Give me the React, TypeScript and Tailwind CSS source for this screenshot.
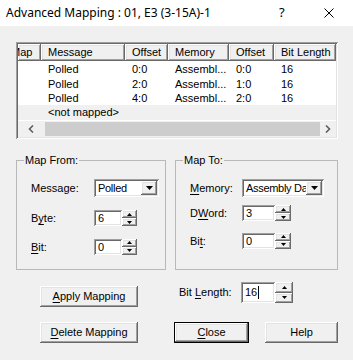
import React from "react";

const sunken =
  "bg-white shadow-[inset_1px_1px_0_#a0a0a0,inset_-1px_-1px_0_#ffffff,inset_2px_2px_0_#696969,inset_-2px_-2px_0_#e3e3e3]";
const raised =
  "bg-[#f0f0f0] shadow-[inset_-1px_-1px_0_#696969,inset_1px_1px_0_#ffffff,inset_-2px_-2px_0_#a0a0a0,inset_2px_2px_0_#e3e3e3]";

function U({ children }: { children: React.ReactNode }) {
  return <span className="underline underline-offset-[2px]">{children}</span>;
}

function Arrow({ dir }: { dir: "up" | "down" }) {
  const pts = dir === "up" ? "0,3 2.5,0 5,3" : "0,0 5,0 2.5,3";
  return (
    <svg width={5} height={3} viewBox="0 0 5 3">
      <polygon points={pts} fill="#000" />
    </svg>
  );
}

function Spin({ w, h }: { w: number; h: number }) {
  return (
    <div className="flex flex-col" style={{ width: w, height: h }}>
      <div className={`${raised} flex-1 flex items-center justify-center`}>
        <Arrow dir="up" />
      </div>
      <div className={`${raised} flex-1 flex items-center justify-center`}>
        <Arrow dir="down" />
      </div>
    </div>
  );
}

function SpinEdit({ value, w, sw, h = 16, caret }: { value: string; w: number; sw: number; h?: number; caret?: boolean }) {
  return (
    <div className="flex">
      <div className={`${sunken} flex items-center pl-[4px]`} style={{ width: w, height: h }}>
        <span>{value}</span>
        {caret && <span className="w-px h-[13px] bg-black ml-px" />}
      </div>
      <Spin w={sw} h={h} />
    </div>
  );
}

function Combo({ value, w }: { value: string; w: number }) {
  return (
    <div className={`${sunken} flex items-center h-[18px] p-[2px]`} style={{ width: w }}>
      <span className="flex-1 overflow-hidden whitespace-nowrap pl-[2px] tracking-[-0.3px]">{value}</span>
      <div className={`${raised} w-[16px] h-full flex items-center justify-center shrink-0`}>
        <svg width="7" height="4" viewBox="0 0 7 4">
          <polygon points="0,0 7,0 3.5,4" fill="#000" />
        </svg>
      </div>
    </div>
  );
}

function Button({ children, w, def }: { children: React.ReactNode; w: number; def?: boolean }) {
  return (
    <div className={`h-[21px] flex ${def ? "border border-black" : ""}`} style={{ width: w }}>
      <div className={`${raised} flex-1 flex items-center justify-center`}>{children}</div>
    </div>
  );
}

const cols = [
  { name: "Map", w: 23 },
  { name: "Message", w: 84 },
  { name: "Offset", w: 43 },
  { name: "Memory", w: 61 },
  { name: "Offset", w: 45 },
  { name: "Bit Length", w: 62 },
];

const rows = [
  ["", "Polled", "0:0", "Assembl...", "0:0", "16"],
  ["", "Polled", "2:0", "Assembl...", "1:0", "16"],
  ["", "Polled", "4:0", "Assembl...", "2:0", "16"],
];

export default function App() {
  return (
    <div className="w-[353px] h-[360px] flex flex-col bg-[#f0f0f0] text-[11px] text-black font-['Liberation_Sans',Arial,sans-serif] overflow-hidden">
      {/* Title bar */}
      <div className="h-[26px] bg-white flex items-center pl-[6px] font-['Noto_Sans',sans-serif] text-[12px]">
        <span className="flex-1">Advanced Mapping : 01, E3 (3-15A)-1</span>
        <span className="w-[12px] text-[13px] mr-[33px]">?</span>
        <svg width="10" height="10" viewBox="0 0 10 10" className="mr-[19px]">
          <path d="M0.5 0.5 L9.5 9.5 M9.5 0.5 L0.5 9.5" stroke="#000" strokeWidth="1" />
        </svg>
      </div>

      {/* List view */}
      <div className={`${sunken} ml-[16px] mt-[16px] w-[322px] h-[97px] p-[2px]`}>
        <div className="flex flex-col h-full overflow-hidden">
          <div className="flex h-[17px] shrink-0">
            {cols.map((c, i) => (
              <div
                key={i}
                className={`${raised} flex items-center overflow-hidden whitespace-nowrap shrink-0 ${i === 0 ? "" : "pl-[7px]"}`}
                style={{ width: c.w }}
              >
                <span className={i === 0 ? "ml-[-7px]" : ""}>{c.name}</span>
              </div>
            ))}
          </div>
          <div className="bg-white flex flex-col">
            {rows.map((r, ri) => (
              <div key={ri} className={`flex ${ri === 0 ? "h-[16px] pt-px" : "h-[14px]"} items-center`}>
                {r.map((t, ci) => (
                  <div key={ci} className="pl-[7px] shrink-0 whitespace-nowrap" style={{ width: cols[ci].w }}>
                    {t}
                  </div>
                ))}
              </div>
            ))}
            <div className="flex h-[15px] items-center bg-[#f0f0f0]">
              <div className="shrink-0" style={{ width: 23 }} />
              <div className="pl-[7px]">&lt;not mapped&gt;</div>
            </div>
            <div className="h-[1px]" />
          </div>
          <div className="flex h-[16px] bg-[#f0f0f0] items-center">
            <div className="w-[25px] flex items-center justify-center">
              <svg width="6" height="8" viewBox="0 0 6 8">
                <path d="M5 0.5 L1.5 4 L5 7.5" stroke="#606060" strokeWidth="1.6" fill="none" />
              </svg>
            </div>
            <div className="w-[2px]" />
            <div className="w-[275px] h-[14px] bg-[#cdcdcd]" />
            <div className="flex-1 flex items-center justify-center">
              <svg width="6" height="8" viewBox="0 0 6 8">
                <path d="M1 0.5 L4.5 4 L1 7.5" stroke="#606060" strokeWidth="1.6" fill="none" />
              </svg>
            </div>
          </div>
        </div>
      </div>

      {/* Group boxes */}
      <div className="flex mt-[15px] ml-[16px] gap-[9px]">
        <fieldset className="w-[150px] h-[116px] border border-[#b8b8b8] pl-[14px]">
          <legend className="ml-[-7px] px-[1px] leading-[12px]">Map From:</legend>
          <div className="flex items-center mt-[13px]">
            <span className="w-[63px]">Message:</span>
            <Combo value="Polled" w={65} />
          </div>
          <div className="flex items-center mt-[13px]">
            <span className="w-[63px]">
              B<U>y</U>te:
            </span>
            <SpinEdit value="6" w={28} sw={15} />
          </div>
          <div className="flex items-center mt-[12px]">
            <span className="w-[63px]">
              <U>B</U>it:
            </span>
            <SpinEdit value="0" w={28} sw={15} />
          </div>
        </fieldset>
        <fieldset className="w-[163px] h-[116px] border border-[#b8b8b8] pl-[14px]">
          <legend className="ml-[-7px] px-[1px] leading-[12px]">Map To:</legend>
          <div className="flex items-center mt-[13px]">
            <span className="w-[52px]">
              <U>M</U>emory:
            </span>
            <Combo value="Assembly Data" w={82} />
          </div>
          <div className="flex items-center mt-[8px]">
            <span className="w-[52px]">
              D<U>W</U>ord:
            </span>
            <SpinEdit value="3" w={33} sw={16} />
          </div>
          <div className="flex items-center mt-[11px]">
            <span className="w-[52px]">
              Bi<U>t</U>:
            </span>
            <SpinEdit value="0" w={33} sw={16} />
          </div>
        </fieldset>
      </div>

      {/* Bottom buttons */}
      <div className="flex items-start mt-[12px] ml-[40px]">
        <div className="mt-[4px]">
          <Button w={98}>
            <span>
              <U>A</U>pply Mapping
            </span>
          </Button>
        </div>
        <div className="ml-[41px] w-[62px] h-[21px] flex items-center">
          <span>
            Bit <U>L</U>ength:
          </span>
        </div>
        <SpinEdit value="16" w={34} sw={18} h={21} caret />
      </div>
      <div className="flex mt-[15px] ml-[40px]">
        <Button w={98}>
          <span>
            <U>D</U>elete Mapping
          </span>
        </Button>
        <div className="ml-[36px]">
          <Button w={75} def>
            <span>
              <U>C</U>lose
            </span>
          </Button>
        </div>
        <div className="ml-[16px]">
          <Button w={73}>
            <span>Help</span>
          </Button>
        </div>
      </div>
    </div>
  );
}
